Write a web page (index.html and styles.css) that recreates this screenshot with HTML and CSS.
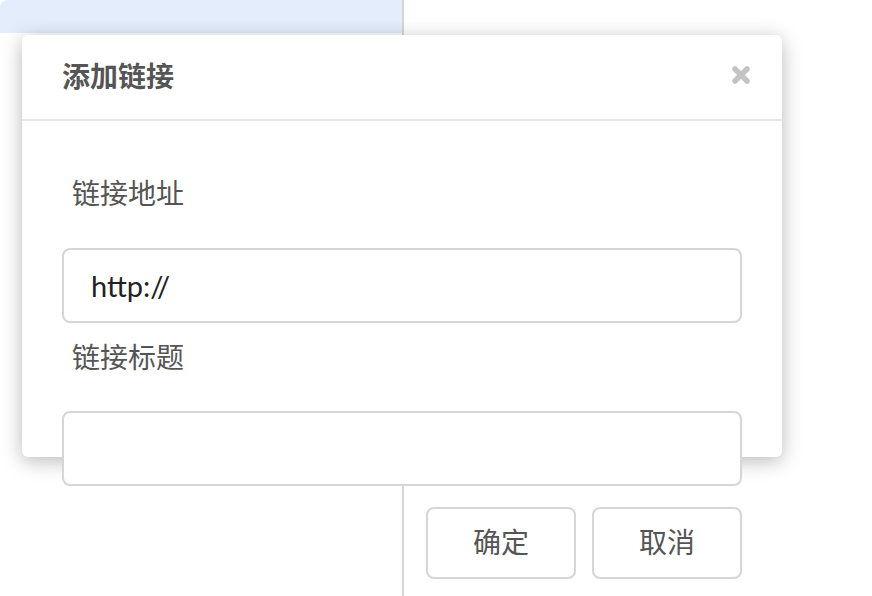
FILE: index.html
```html
<!DOCTYPE html>
<html lang="zh-CN">
<head>
<meta charset="utf-8">
<title>添加链接</title>
<link rel="stylesheet" href="styles.css">
</head>
<body>
<div class="page">
  <div class="left-pane">
    <div class="tab-bar"></div>
  </div>
  <div class="right-pane"></div>
</div>

<div class="modal">
  <div class="modal-header">
    <h3 class="modal-title">添加链接</h3>
    <button class="close-btn" aria-label="关闭">
      <svg width="20" height="20" viewBox="0 0 20 20">
        <path d="M4 4 L16 16 M16 4 L4 16" stroke="#c3c3c3" stroke-width="5.5" stroke-linecap="round" fill="none"/>
      </svg>
    </button>
  </div>
  <div class="modal-body">
    <label class="field-label">链接地址</label>
    <input class="field-input" type="text" value="http://">
    <label class="field-label second">链接标题</label>
    <input class="field-input" type="text" value="">
    <div class="actions">
      <button class="btn">确定</button>
      <button class="btn">取消</button>
    </div>
  </div>
</div>
</body>
</html>
```

FILE: styles.css
```css
html, body {
  margin: 0;
  padding: 0;
  background: #ffffff;
}

body {
  font-family: "Lato", "Noto Sans CJK SC", sans-serif;
  color: #555555;
  width: 872px;
  height: 596px;
  overflow: hidden;
  position: relative;
}

.page {
  display: flex;
  height: 596px;
}

.left-pane {
  width: 402px;
  border-right: 2px solid #d6d6d6;
}

.tab-bar {
  height: 33px;
  background: #e3edfb;
  border-top-left-radius: 8px;
}

.right-pane {
  flex: 1;
}

.modal {
  position: absolute;
  left: 22px;
  top: 35px;
  width: 760px;
  height: 422px;
  background: #ffffff;
  border-radius: 6px;
  box-shadow: 0 4px 20px rgba(0, 0, 0, 0.28);
}

.modal-header {
  height: 86px;
  box-sizing: border-box;
  border-bottom: 2px solid #e6e6e6;
  display: flex;
  align-items: center;
  justify-content: space-between;
  padding: 0 31px 2px 40px;
}

.modal-title {
  margin: 0;
  font-size: 28px;
  font-weight: 600;
  color: #555555;
  line-height: 40px;
}

.close-btn {
  border: 0;
  background: none;
  padding: 0;
  width: 20px;
  height: 20px;
  display: flex;
  margin-top: -2px;
}

.modal-body {
  padding: 52px 40px 0 40px;
}

.field-label {
  display: block;
  font-size: 28px;
  line-height: 40px;
  padding-left: 10px;
  margin-bottom: 35px;
  color: #555555;
}

.field-label.second {
  margin-top: 14px;
  margin-bottom: 34px;
}

.field-input {
  display: block;
  box-sizing: border-box;
  width: 100%;
  height: 75px;
  margin: 0;
  border: 2px solid #d6d6d6;
  border-radius: 8px;
  padding: 0 27px;
  font-family: "Lato", "Noto Sans CJK SC", sans-serif;
  font-size: 29px;
  color: #222222;
  background: #ffffff;
  outline: none;
}

.actions {
  display: flex;
  justify-content: flex-end;
  gap: 16px;
  margin-top: 21px;
}

.btn {
  width: 150px;
  height: 72px;
  box-sizing: border-box;
  border: 2px solid #d6d6d6;
  border-radius: 8px;
  background: #ffffff;
  font-family: "Lato", "Noto Sans CJK SC", sans-serif;
  font-size: 28px;
  color: #555555;
  padding: 0 0 4px 0;
}
```
